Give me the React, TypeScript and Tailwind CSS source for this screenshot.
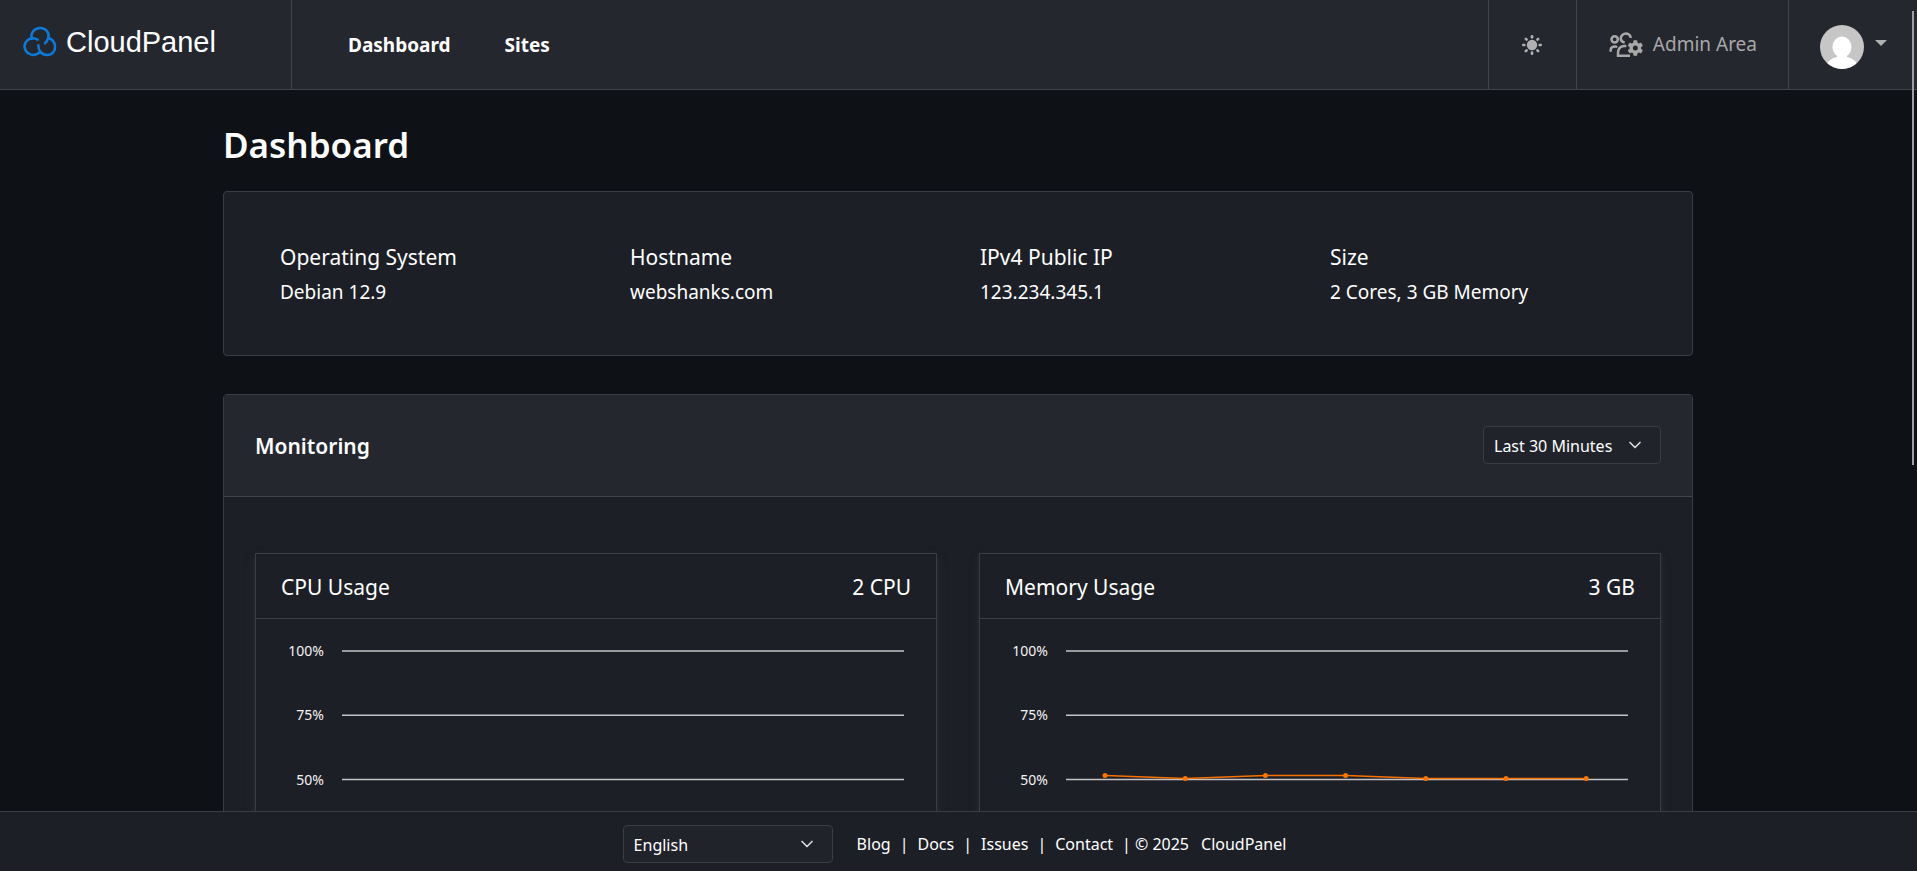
import { useState } from "react";
import { ChevronDown } from "lucide-react";

const NAV = ["Dashboard", "Sites"];

const SERVER_INFO = [
  { label: "Operating System", value: "Debian 12.9" },
  { label: "Hostname", value: "webshanks.com" },
  { label: "IPv4 Public IP", value: "123.234.345.1" },
  { label: "Size", value: "2 Cores, 3 GB Memory" },
];

const FOOTER_LINKS = ["Blog", "Docs", "Issues", "Contact"];

const MEMORY_POINTS = [51.6, 50.4, 51.6, 51.6, 50.4, 50.4, 50.4];

function Logo() {
  return (
    <svg viewBox="38 30 102 93" className="w-[34px] h-[31px]" fill="none" stroke="#0a7bdc" strokeWidth="7.5" strokeLinecap="round">
      <path d="M64 68C60 50 72 36 90 36C108 36 118 52 114 64C112 72 109 78 104 82" />
      <path d="M82 71C72 65 60 66 51 73C38 84 41 104 54 112C66 120 80 117 89 108" />
      <path d="M84 88C84 104 94 117 110 117C126 117 136 104 134 90C133 78 126 70 115 66" />
    </svg>
  );
}

function SunIcon() {
  return (
    <svg viewBox="0 0 60 60" className="w-5 h-5" fill="#b0b0b0">
      <circle cx="30" cy="30" r="15.5" />
      {[0, 45, 90, 135, 180, 225, 270, 315].map((a) => (
        <rect key={a} x="26" y="0" width="8" height="11" rx="4" transform={`rotate(${a} 30 30)`} />
      ))}
    </svg>
  );
}

function AdminIcon() {
  return (
    <svg viewBox="54 34 105 75" className="w-[35px] h-[25px]" fill="none" stroke="#a8a8a8" strokeWidth="7.5">
      <circle cx="71" cy="56" r="9.5" />
      <path d="M59 90V88C59 80 66 77 76 78" strokeLinecap="round" />
      <path d="M101 66C91 63 88 56 90 49C93 40 104 36 113 41C117 43 119 47 119 52" />
      <path d="M106 76H99C88 77 81 85 81 98V105H117" />
      <circle cx="133" cy="82" r="12.5" strokeWidth="10" />
      {[0, 60, 120, 180, 240, 300].map((a) => (
        <rect key={a} x="127" y="59" width="12" height="10" rx="2" fill="#a8a8a8" stroke="none" transform={`rotate(${a} 133 82)`} />
      ))}
    </svg>
  );
}

function Avatar() {
  return (
    <svg viewBox="0 0 44 44" className="w-11 h-11 rounded-full">
      <rect width="44" height="44" fill="#c6c6c6" />
      <ellipse cx="22" cy="22" rx="9.5" ry="10.5" fill="#fff" />
      <path d="M17 28H27V32C32 33 35 35 37 39V44H7V39C9 35 12 33 17 32Z" fill="#fff" />
    </svg>
  );
}

function UsageChart({ points }: { points: number[] }) {
  const y = (v: number) => 32 + (100 - v) * 2.57;
  const x = (i: number) => 125 + i * 80.2;
  return (
    <svg viewBox="0 0 680 330" className="block w-full">
      {[100, 75, 50, 25, 0].map((v) => (
        <g key={v}>
          <text x="68" y={y(v) + 5} textAnchor="end" fill="#f3f3f3" fontSize="14">{v}%</text>
          <line x1="86" x2="648" y1={y(v)} y2={y(v)} stroke="#c4c4c6" strokeWidth="1.5" />
        </g>
      ))}
      <polyline points={points.map((p, i) => `${x(i)},${y(p)}`).join(" ")} fill="none" stroke="#f57200" strokeWidth="1.5" />
      {points.map((p, i) => (
        <circle key={i} cx={x(i)} cy={y(p)} r="2.5" fill="#ff7300" />
      ))}
    </svg>
  );
}

function UsageCard({ title, total, points }: { title: string; total: string; points: number[] }) {
  return (
    <section className="flex-1 min-w-0 border border-[#3a3c46] shadow-[0_4px_8px_rgba(58,60,70,0.5)] bg-[#1d1f26]">
      <div className="h-[65px] px-[25px] pt-1 flex items-center justify-between border-b border-[#3a3c46] text-[21px]">
        <h3>{title}</h3>
        <span>{total}</span>
      </div>
      <UsageChart points={points} />
    </section>
  );
}

export default function App() {
  const [period, setPeriod] = useState("Last 30 Minutes");
  const [lang, setLang] = useState("English");

  return (
    <div className="h-screen flex flex-col bg-[#0e1216] text-white font-['Noto_Sans','Open_Sans',sans-serif]">
      <header className="h-[90px] shrink-0 flex bg-[#25272f] border-b border-[#42444d]">
        <a href="#" className="w-[292px] pl-[23px] pb-1.5 flex items-center gap-[9px] border-r border-[#42444d]">
          <Logo />
          <span className="pt-0.5 text-[29px] font-['Liberation_Sans',Arial,sans-serif]">CloudPanel</span>
        </a>
        <nav className="flex-1 flex items-center gap-[54px] pl-14 pt-0.5 text-[19px] font-bold">
          {NAV.map((item) => (
            <a key={item} href="#">{item}</a>
          ))}
        </nav>
        <button aria-label="Toggle theme" className="w-[88px] flex items-center justify-center border-l border-[#42444d]">
          <SunIcon />
        </button>
        <a href="#" className="pl-8 pr-[31px] flex items-center gap-[9px] border-l border-[#42444d] text-[19px] text-[#a8a8a8]">
          <AdminIcon />
          Admin Area
        </a>
        <button aria-label="Account menu" className="w-[129px] pl-[31px] pt-1 flex items-center gap-[11px] border-l border-[#42444d]">
          <Avatar />
          <svg viewBox="0 0 12 6" className="w-3 h-1.5 mb-2" fill="#b0b0b0">
            <path d="M0 0H12L6 6Z" />
          </svg>
        </button>
      </header>

      <main className="flex-1 min-h-0 pr-px overflow-y-auto [scrollbar-width:none]">
        <div className="max-w-[1470px] mx-auto pt-[35px] pb-12">
          <h1 className="text-[35px] leading-10 font-semibold">Dashboard</h1>

          <dl className="mt-[26px] px-[34px] py-[49px] grid grid-cols-4 rounded-sm border border-[#3a3c46] bg-[#1d1f26]">
            {SERVER_INFO.map((s) => (
              <div key={s.label} className="pl-[22px]">
                <dt className="text-[21px] leading-8">{s.label}</dt>
                <dd className="mt-[5px] text-[19px] leading-7">{s.value}</dd>
              </div>
            ))}
          </dl>

          <section className="mt-[38px] rounded-sm border border-[#3a3c46] bg-[#1d1f26]">
            <div className="px-[31px] pt-[31px] pb-8 flex items-center justify-between border-b border-[#42444d] bg-[#25272f]">
              <h2 className="pt-1 text-[21px] font-semibold">Monitoring</h2>
              <div className="relative">
                <select
                  aria-label="Period"
                  value={period}
                  onChange={(e) => setPeriod(e.target.value)}
                  className="appearance-none w-[178px] h-[38px] pl-2.5 pt-0.5 rounded border border-[#3a3c46] bg-[#21232b] text-[16px]"
                >
                  <option>Last 30 Minutes</option>
                  <option>Last 1 Hour</option>
                  <option>Last 24 Hours</option>
                </select>
                <ChevronDown size={20} className="absolute right-4 top-[9px] pointer-events-none text-[#dcdcdc]" />
              </div>
            </div>
            <div className="px-[31px] pt-14 pb-8 flex gap-[42px]">
              <UsageCard title="CPU Usage" total="2 CPU" points={[]} />
              <UsageCard title="Memory Usage" total="3 GB" points={MEMORY_POINTS} />
            </div>
          </section>
        </div>
      </main>

      <footer className="h-[60px] shrink-0 pt-1 pr-2 flex items-center justify-center border-t border-[#3a3c46] bg-[#1d1f26] text-[16px]">
        <div className="relative mr-6">
          <select
            aria-label="Language"
            value={lang}
            onChange={(e) => setLang(e.target.value)}
            className="appearance-none w-[210px] h-[38px] pl-2.5 pt-0.5 rounded border border-[#3a3c46] bg-[#21232b]"
          >
            <option>English</option>
            <option>Deutsch</option>
          </select>
          <ChevronDown size={20} className="absolute right-4 top-[9px] pointer-events-none text-[#dcdcdc]" />
        </div>
        <ul className="flex">
          {FOOTER_LINKS.map((l) => (
            <li key={l} className="group flex">
              <a href="#">{l}</a>
              <span className="px-[9px] group-last:pr-1">|</span>
            </li>
          ))}
        </ul>
        <span>© 2025</span>
        <a href="#" className="ml-3">CloudPanel</a>
      </footer>

      <div className="fixed right-[3px] top-[11px] w-0.5 h-[454px] bg-[#9f9f9f]" />
    </div>
  );
}
